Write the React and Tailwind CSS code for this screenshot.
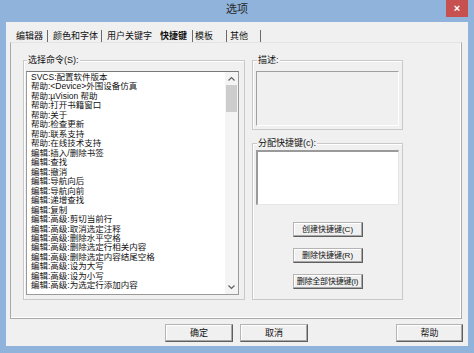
import React from "react";

const items = [
  "SVCS:配置软件版本",
  "帮助:<Device>外围设备仿真",
  "帮助:µVision 帮助",
  "帮助:打开书籍窗口",
  "帮助:关于",
  "帮助:检查更新",
  "帮助:联系支持",
  "帮助:在线技术支持",
  "编辑:插入/删除书签",
  "编辑:查找",
  "编辑:撤消",
  "编辑:导航向后",
  "编辑:导航向前",
  "编辑:递增查找",
  "编辑:复制",
  "编辑:高级:剪切当前行",
  "编辑:高级:取消选定注释",
  "编辑:高级:删除水平空格",
  "编辑:高级:删除选定行相关内容",
  "编辑:高级:删除选定内容结尾空格",
  "编辑:高级:设为大写",
  "编辑:高级:设为小写",
  "编辑:高级:为选定行添加内容",
];

const btn =
  "flex items-center justify-center whitespace-nowrap bg-[#f0f0f0] border border-[#b4b4b4] border-r-[#5e5e5e] border-b-[#5e5e5e] shadow-[inset_-1px_-1px_0_#a8a8a8,inset_1px_1px_0_#ffffff] leading-none text-[#111]";

function Sep() {
  return <div className="w-[1px] h-[13px] bg-[#6a6a6a]" />;
}

export default function App() {
  return (
    <div className="w-[474px] h-[353px] bg-[#8fb3da] flex flex-col px-[6px] pb-[7px] overflow-hidden font-['Liberation_Sans','Noto_Sans_CJK_SC',sans-serif] text-[#111]">
      {/* title bar */}
      <div className="relative h-[22px] flex items-center justify-center">
        <span className="text-[11px] leading-none text-[#262626] -mt-[3px]">选项</span>
        <div className="absolute right-0 top-0 w-[22px] h-[17px] bg-[#c75050] flex items-center justify-center text-white text-[11px] leading-none font-bold">
          ×
        </div>
      </div>

      {/* client */}
      <div className="flex-1 bg-[#f0f0f0] flex flex-col">
        {/* tabs */}
        <div className="h-[20px] pt-[8px] flex items-center pl-[10px] text-[9px] leading-none">
          <span>编辑器</span>
          <div className="ml-[4px]"><Sep /></div>
          <span className="ml-[5px]">颜色和字体</span>
          <div className="ml-[3px]"><Sep /></div>
          <span className="ml-[5px]">用户关键字</span>
          <span className="ml-[8px] font-semibold">快捷键</span>
          <div className="ml-[5px]"><Sep /></div>
          <span className="ml-[2px]">模板</span>
          <div className="ml-[13px]"><Sep /></div>
          <span className="ml-[3px]">其他</span>
          <div className="ml-[12px]"><Sep /></div>
        </div>

        {/* panel */}
        <div className="ml-[4px] mr-[6px] h-[277px] border border-[#a9a9a9] border-t-[#e4e4e4] shadow-[inset_-1px_-1px_0_#ffffff] flex gap-[7px] pl-[12px] pt-[17px]">
          {/* 选择命令 groupbox */}
          <div className="relative w-[222px] h-[240px] border border-[#c9c9c9] shadow-[inset_1px_1px_0_#ffffff] pl-[2px] pt-[10px]">
            <span className="absolute -top-[6px] left-[3px] bg-[#f0f0f0] px-[1px] text-[9px] leading-[10px]">
              选择命令(S):
            </span>
            <div className="w-[213px] h-[224px] bg-white border border-[#9a9a9a] border-t-[#7a7a7a] flex">
              <div className="flex-1 pl-[4px] pt-[1px] overflow-hidden">
                {items.map((t, i) => (
                  <div key={i} className="text-[8.5px] leading-[9.47px] whitespace-nowrap text-[#111]">
                    {t}
                  </div>
                ))}
              </div>
              <div className="w-[13px] flex flex-col bg-[#f4f4f4]">
                <div className="h-[13px] flex items-center justify-center">
                  <svg width="7" height="5" viewBox="0 0 7 5">
                    <path d="M0.5 4.5 L3.5 1.5 L6.5 4.5" stroke="#606060" strokeWidth="1.2" fill="none" />
                  </svg>
                </div>
                <div className="mx-[1px] h-[27px] bg-[#cdcdcd]" />
                <div className="flex-1" />
                <div className="h-[13px] flex items-center justify-center">
                  <svg width="7" height="5" viewBox="0 0 7 5">
                    <path d="M0.5 0.5 L3.5 3.5 L6.5 0.5" stroke="#606060" strokeWidth="1.2" fill="none" />
                  </svg>
                </div>
              </div>
            </div>
          </div>

          {/* right column */}
          <div className="w-[151px] flex flex-col gap-[13px]">
            <div className="relative h-[70px] border border-[#c9c9c9] shadow-[inset_1px_1px_0_#ffffff] pl-[3px] pt-[10px]">
              <span className="absolute -top-[6px] left-[4px] bg-[#f0f0f0] px-[1px] text-[9px] leading-[10px]">
                描述:
              </span>
              <div className="w-[143px] h-[55px] border border-[#a0a0a0] border-r-[#ffffff] border-b-[#ffffff] bg-[#f0f0f0]" />
            </div>

            <div className="relative h-[157px] border border-[#c9c9c9] shadow-[inset_1px_1px_0_#ffffff] pl-[3px] pt-[6px] flex flex-col">
              <span className="absolute -top-[6px] left-[4px] bg-[#f0f0f0] px-[1px] text-[9px] leading-[10px]">
                分配快捷键(c):
              </span>
              <div className="w-[143px] h-[55px] bg-white border-t-2 border-l-2 border-[#9a9a9a] border-r border-b border-r-[#e6e6e6] border-b-[#e6e6e6]" />
              <div className="flex flex-col items-center gap-[11px] mt-[17px] pr-[3px]">
                <div className={`${btn} w-[70px] h-[15px] text-[8px]`}>创建快捷键(C)</div>
                <div className={`${btn} w-[70px] h-[15px] text-[8px]`}>删除快捷键(R)</div>
                <div className={`${btn} w-[70px] h-[15px] text-[8px] tracking-[-0.2px]`}>删除全部快捷键(I)</div>
              </div>
            </div>
          </div>
        </div>

        {/* bottom buttons */}
        <div className="flex pl-[159px] pt-[5px] pr-[5px] gap-[7px]">
          <div className={`${btn} w-[68px] h-[18px] text-[9px]`}>确定</div>
          <div className={`${btn} w-[68px] h-[18px] text-[9px]`}>取消</div>
          <div className={`${btn} w-[67px] h-[18px] text-[9px] ml-auto`}>帮助</div>
        </div>
      </div>
    </div>
  );
}
